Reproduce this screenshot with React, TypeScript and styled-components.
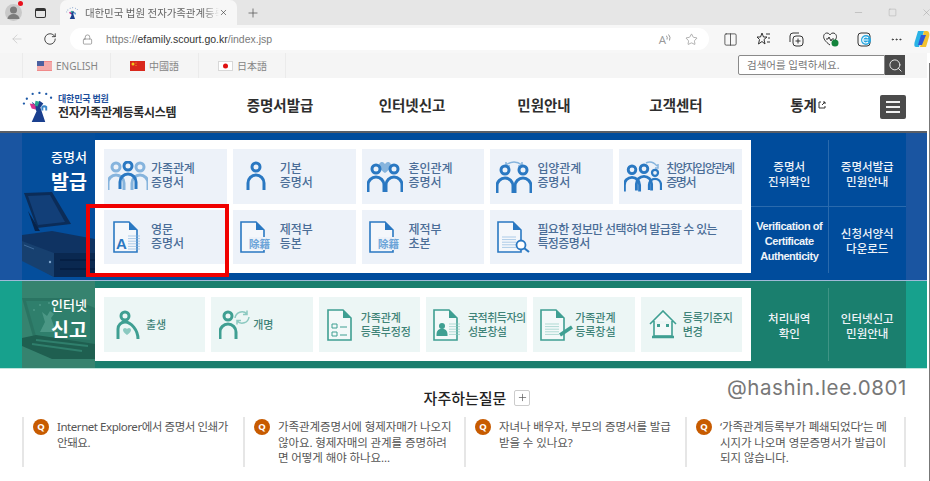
import React from "react";
import styled, { createGlobalStyle } from "styled-components";
import {
  ArrowLeft,
  Columns2,
  Lock,
  Minus,
  MoreHorizontal,
  Plus,
  RotateCw,
  Search,
  Square,
  Star,
  X,
} from "lucide-react";

const BLUE = { main: "#004c9c", side: "#1a55a1", head: "#044e9c", card: "#edf2f9", label: "#4a6d97", rule: "#2a6aad" };
const GREEN = { main: "#1a7f6e", side: "#17a18d", head: "#36836f", card: "#ecf6f5", label: "#3f8378", rule: "#3f9485" };
const KR = `"Noto Sans", "Noto Sans CJK KR", sans-serif`;

const GlobalStyle = createGlobalStyle`
  html, body { margin: 0; padding: 0; background: #fff; }
  body { font-family: ${KR}; overflow: hidden; }
  * { box-sizing: border-box; }
`;

const Screen = styled.div`
  width: 930px;
  height: 481px;
  overflow: hidden;
  display: flex;
  flex-direction: column;
`;

/* browser chrome */
const TabStrip = styled.div`
  height: 25px;
  flex: none;
  background: #e6e6e6;
  display: flex;
  align-items: center;
  color: #444;
`;

const Avatar = styled.div`
  position: relative;
  width: 17px;
  height: 17px;
  margin-left: 5px;
  border-radius: 50%;
  background: #c9c9c9;
  display: flex;
  justify-content: center;
  overflow: visible;
`;

const AvatarDot = styled.span`
  position: absolute;
  top: -3px;
  right: -1px;
  width: 5px;
  height: 5px;
  border-radius: 50%;
  background: #e8101c;
`;

const TabsButton = styled.div`
  width: 11px;
  height: 10px;
  margin: 0 0 0 13px;
  border: 1.4px solid #333;
  border-top-width: 3px;
  border-radius: 2px;
`;

const Tab = styled.div`
  width: 177px;
  height: 25px;
  margin-left: 14px;
  padding: 0 7px 0 6px;
  background: #f7f7f7;
  border-radius: 7px 7px 0 0;
  display: flex;
  align-items: center;
`;

const TabTitle = styled.span`
  width: 134px;
  margin-left: 7px;
  font-size: 10.5px;
  color: #666;
  white-space: nowrap;
  letter-spacing: -0.1px;
  -webkit-mask-image: linear-gradient(90deg, #000 88%, transparent);
`;

const NewTab = styled.div`
  margin-left: 9px;
  display: flex;
  color: #555;
`;

const WindowButtons = styled.div`
  margin-left: auto;
  margin-right: -2px;
  display: flex;
  align-items: center;
  gap: 24px;
  color: #9a9a9a;
`;

const Toolbar = styled.div`
  height: 28px;
  flex: none;
  background: #f7f7f7;
  display: flex;
  align-items: center;
  padding-left: 10px;
  color: #333;
`;

const AddressPill = styled.div`
  width: 640px;
  height: 22px;
  margin-left: 13px;
  padding: 0 11px 0 12px;
  background: #fff;
  border-radius: 11px;
  display: flex;
  align-items: center;
  color: #777;
`;

const Url = styled.span`
  margin-left: 13px;
  font: 10.5px "Liberation Sans", sans-serif;
  color: #7a7a7a;
  b { font-weight: 400; color: #333; }
`;

const PillRight = styled.div`
  margin-left: auto;
  display: flex;
  align-items: center;
  gap: 14px;
  color: #888;
`;

const ReadAloud = styled.span`
  display: flex;
  align-items: flex-start;
  font: 11.5px "Open Sans", sans-serif;
  color: #999;
`;

const ToolIcons = styled.div`
  margin-left: 14px;
  display: flex;
  align-items: center;
  gap: 18px;
  color: #333;
`;

/* page */
const Body = styled.div`
  flex: 1;
  min-height: 0;
  display: flex;
`;

const Page = styled.div`
  width: 927px;
  flex: none;
`;

const Scrollbar = styled.div`
  flex: 1;
  margin-top: 10px;
  border-right: 1px solid #777;
`;

const UtilBar = styled.div`
  height: 25px;
  background: #f5f5f5;
  display: flex;
  padding: 0 22px 0 22px;
  align-items: stretch;
`;

const LangLink = styled.div`
  width: 88px;
  display: flex;
  align-items: center;
  justify-content: flex-start;
  gap: 4px;
  padding-left: ${({ $indent }: { $indent: number }) => $indent}px;
  border-left: 1px solid #ebebeb;
  font-size: 10px;
  color: #858585;
  &:nth-child(3) { border-right: 1px solid #ebebeb; }
`;

const SearchBox = styled.div`
  margin: 2px 0 3px auto;
  width: 167px;
  display: flex;
`;

const SearchInput = styled.div`
  flex: 1;
  padding-left: 8px;
  background: #fff;
  border: 1px solid #8a8a8a;
  border-radius: 2px 0 0 2px;
  font-size: 10.5px;
  line-height: 18px;
  color: #777;
`;

const SearchButton = styled.div`
  width: 20px;
  background: #4b4b4b;
  color: #e6e6e6;
  display: flex;
  align-items: center;
  justify-content: center;
`;

const Header = styled.header`
  height: 55px;
  border-bottom: 2px solid #5b5f66;
  display: flex;
  align-items: center;
  padding: 0 21px 0 22px;
`;

const Logo = styled.div`
  width: 192px;
  display: flex;
  align-items: center;
  gap: 5px;
  padding-top: 4px;
`;

const LogoText = styled.div`
  display: flex;
  flex-direction: column;
`;

const LogoSmall = styled.span`
  font-size: 9px;
  line-height: 13px;
  font-weight: 700;
  letter-spacing: -0.2px;
  color: #1d4f9c;
`;

const LogoBig = styled.span`
  font-size: 12px;
  line-height: 16px;
  font-weight: 700;
  letter-spacing: -0.3px;
  color: #2c2c2c;
`;

const Nav = styled.nav`
  display: grid;
  grid-template-columns: repeat(5, 132px);
`;

const NavItem = styled.div`
  text-align: center;
  font-size: 14.5px;
  font-weight: 700;
  color: #2e2e2e;
  display: flex;
  align-items: center;
  justify-content: center;
  gap: 1px;
`;

const MenuButton = styled.div`
  margin-left: auto;
  margin-top: 4px;
  width: 26px;
  height: 24px;
  background: #4b4b4b;
  border-radius: 2px;
  display: flex;
  flex-direction: column;
  justify-content: center;
  align-items: center;
  gap: 3px;
  span { width: 14px; height: 2px; background: #f0f0f0; }
`;

type Tone = typeof BLUE;

const Band = styled.section<{ $tone: Tone; $h: number; $line: string }>`
  height: ${({ $h }) => $h}px;
  background: ${({ $tone }) => $tone.main};
  border-bottom: 1px solid ${({ $line }) => $line};
  display: grid;
  grid-template-columns: 22px 73px 656px 155px 21px;
`;

const Side = styled.div<{ $tone: Tone }>`
  background: ${({ $tone }) => $tone.side};
`;

const Head = styled.div<{ $tone: Tone }>`
  position: relative;
  overflow: hidden;
  background: ${({ $tone }) => $tone.head};
  display: flex;
  flex-direction: column;
  align-items: flex-end;
  padding: 15px 8px 0 0;
  color: #fff;
`;

const HeadSmall = styled.span`
  position: relative;
  font-size: 13px;
  line-height: 19px;
  font-weight: 500;
`;

const HeadBig = styled.span`
  position: relative;
  font-size: 19.5px;
  line-height: 29px;
  margin-bottom: -6px;
  font-weight: 700;
`;

const HeadArt = styled.div`
  align-self: flex-start;
  margin: 1px -8px 0 0;
  display: flex;
`;

const HeadBack = styled.div`
  position: absolute;
  left: 0;
  top: 15px;
  display: flex;
`;

const Panel = styled.div<{ $cols: number; $rows: number }>`
  position: relative;
  margin: 7px 0;
  padding: 9px;
  background: #fff;
  display: grid;
  grid-template-columns: repeat(${({ $cols }) => $cols}, minmax(0, 1fr));
  grid-template-rows: repeat(${({ $rows }) => $rows}, 1fr);
  gap: 6px;
`;

const Card = styled.div<{ $tone: Tone; $span?: number; $text: number; $small?: boolean }>`
  position: relative;
  grid-column: span ${({ $span }) => $span ?? 1};
  background: ${({ $tone }) => $tone.card};
  color: ${({ $tone }) => $tone.label};
  display: grid;
  grid-template-columns: ${({ $text }) => $text}px 1fr;
  align-items: center;
  font-size: ${({ $small }) => ($small ? 11 : 12)}px;
  line-height: 14px;
  font-weight: 500;
  letter-spacing: -0.1px;
`;

const CardIcon = styled.div<{ $nudge?: number }>`
  display: flex;
  justify-content: center;
  padding-left: ${({ $nudge }) => $nudge ?? 0}px;
`;

const CardLabel = styled.div<{ $track?: number }>`
  white-space: pre;
  letter-spacing: ${({ $track }) => $track ?? -0.1}px;
`;

const RedFrame = styled.div`
  position: absolute;
  left: -18px;
  right: -2px;
  top: -6px;
  bottom: -13px;
  border: 4px solid #f00000;
  pointer-events: none;
`;

const Links = styled.div<{ $rows: number; $rule: string }>`
  margin: 7px 0;
  display: grid;
  grid-template-columns: 1fr 1fr;
  grid-template-rows: ${({ $rows }) => ($rows === 2 ? "67px 1fr" : "1fr")};
  & > div { border-color: ${({ $rule }) => $rule}; }
`;

const LinkCell = styled.div<{ $right?: boolean; $bottom?: boolean }>`
  display: flex;
  align-items: center;
  justify-content: center;
  text-align: center;
  white-space: pre-line;
  padding-top: 2px;
  color: #eef3f8;
  font-size: 11.5px;
  line-height: 15px;
  font-weight: 500;
  border-style: solid;
  border-width: 0 ${({ $right }) => ($right ? "1px" : 0)} ${({ $bottom }) => ($bottom ? "1px" : 0)} 0;
`;

const LinkEnglish = styled(LinkCell)`
  font-family: "Liberation Sans", sans-serif;
  font-size: 11px;
  font-weight: 700;
  letter-spacing: -0.45px;
`;

const Faq = styled.section`
  position: relative;
  padding: 20px 22px 0;
`;

const FaqTitleRow = styled.div`
  display: flex;
  justify-content: center;
  align-items: center;
  gap: 8px;
  padding-left: 27px;
  height: 17px;
`;

const FaqTitle = styled.h2`
  margin: 0;
  font-size: 15px;
  font-weight: 500;
  color: #222;
`;

const FaqPlus = styled.div`
  width: 16px;
  height: 16px;
  border: 1px solid #ccc;
  border-radius: 2px;
  display: flex;
  align-items: center;
  justify-content: center;
  color: #555;
`;

const FaqGrid = styled.div`
  margin-top: 11px;
  width: 884px;
  display: grid;
  grid-template-columns: repeat(4, 221px);
  border-right: 2px solid #e6e6e6;
`;

const FaqItem = styled.div`
  height: 50px;
  border-left: 2px solid #e6e6e6;
  padding: 2px 0 0 9px;
  display: grid;
  grid-template-columns: 16px 1fr;
  column-gap: 8px;
`;

const QBadge = styled.div`
  width: 16px;
  height: 16px;
  border-radius: 50%;
  background: #c75b00;
  color: #fff;
  font-size: 9.5px;
  font-weight: 700;
  line-height: 16px;
  text-align: center;
`;

const FaqText = styled.div<{ $track?: number }>`
  font-size: 11.5px;
  line-height: 15.7px;
  color: #555;
  letter-spacing: ${({ $track }) => $track ?? -0.1}px;
  white-space: pre;
`;

const Watermark = styled.div`
  position: absolute;
  top: 7px;
  right: 20px;
  font: 400 20.5px "Inter", sans-serif;
  line-height: 24px;
  letter-spacing: 0.6px;
  color: #777;
`;

/* drawings */
const Person = ({ x, y, c, s = 1 }: { x: number; y: number; c: string; s?: number }) => (
  <g transform={`translate(${x} ${y}) scale(${s})`} fill="none" stroke={c} strokeWidth={3}>
    <circle cx={0} cy={5} r={4} />
    <path d="M-8 28v-7a8 8 0 0 1 16 0v7" />
  </g>
);

const Doc = ({ c, x = 1 }: { c: string; x?: number }) => (
  <>
    <path d={`M${x} 1h15l8 8v22h-23z`} fill="#fff" fillOpacity={0.4} stroke={c} strokeWidth={1.6} />
    <path d={`M${x + 15} 1v8h8z`} fill={c} />
  </>
);

const Lines = ({ x, y, c, n = 5, w = 12 }: { x: number; y: number; c: string; n?: number; w?: number }) => (
  <path
    d={Array.from({ length: n }, (_, i) => `M${x} ${y + i * 2.6}h${w}`).join("")}
    stroke={c}
    strokeWidth={1}
    opacity={0.65}
  />
);

const ArrowArc = ({ x, y, c }: { x: number; y: number; c: string }) => (
  <path d={`M${x} ${y + 4}q8 -6 16 0M${x} ${y + 1}v4h4M${x + 16} ${y + 1}v4h-4`} fill="none" stroke={c} strokeWidth={1.5} />
);

const Svg = styled.svg`
  display: block;
  flex: none;
`;

const B = "#2a78c2";
const BL = "#86b4dd";
const G = "#3f9f92";
const GL = "#8bc9c0";

const icons: Record<string, React.ReactNode> = {
  family: (
    <Svg width={40} height={30} viewBox="0 0 40 30">
      <Person x={8} y={1} c={BL} />
      <Person x={32} y={1} c={BL} />
      <Person x={20} y={0} c={B} />
    </Svg>
  ),
  basic: (
    <Svg width={20} height={30} viewBox="0 0 20 30">
      <Person x={10} y={1} c={B} />
    </Svg>
  ),
  marriage: (
    <Svg width={36} height={33} viewBox="0 0 36 33">
      <path d="M18 13c-9-6-6-11-3-11 1.500 0 3 2 3 2s1.500-2 3-2c3 0 6 5-3 11z" fill={BL} />
      <Person x={9} y={4} c={B} />
      <Person x={27} y={4} c={B} />
    </Svg>
  ),
  adopt: (
    <Svg width={36} height={33} viewBox="0 0 36 33">
      <ArrowArc x={10} y={1} c={BL} />
      <Person x={9} y={5} c={B} />
      <Person x={27} y={5} c={B} />
    </Svg>
  ),
  parental: (
    <Svg width={38} height={33} viewBox="0 0 38 33">
      <path d="M22 3q6-3 11 3M31 8h3v-4" fill="none" stroke={BL} strokeWidth={1.5} />
      <Person x={8} y={5} c={B} s={0.95} />
      <Person x={20} y={4} c={B} s={0.95} />
      <Person x={31} y={9} c={B} s={0.75} />
    </Svg>
  ),
  english: (
    <Svg width={30} height={32} viewBox="0 0 30 32">
      <Doc c={B} />
      <text x={3} y={28} fontFamily="Liberation Sans" fontWeight={700} fontSize={15} fill={B}>A</text>
      <Lines x={15} y={15} c={BL} n={6} />
    </Svg>
  ),
  removed: (
    <Svg width={32} height={32} viewBox="0 0 32 32">
      <Doc c={B} />
      <rect x={9} y={16} width={23} height={13} fill={BLUE.card} />
      <text x={9} y={27} fontFamily="Noto Sans CJK TC" fontWeight={700} fontSize={10.5} fill="#6ba4d8">除籍</text>
    </Svg>
  ),
  special: (
    <Svg width={34} height={32} viewBox="0 0 34 32">
      <Doc c={B} />
      <Lines x={5} y={16} c={BL} n={5} w={14} />
      <circle cx={24} cy={24} r={4.500} fill="#fff" stroke={B} strokeWidth={1.8} />
      <path d="M27 27l5 4" stroke={B} strokeWidth={2.2} />
    </Svg>
  ),
  birth: (
    <Svg width={24} height={30} viewBox="0 0 24 30">
      <circle cx={9} cy={6} r={4} fill="none" stroke={G} strokeWidth={3} />
      <path d="M2 29V19a7 7 0 0 1 7-7c6 0 13 8 13 17" fill="none" stroke={G} strokeWidth={3} />
      <path d="M11 25c-6-4-4-7-2-7 1 0 2 1 2 1s1-1 2-1c2 0 4 3-2 7z" fill={GL} />
    </Svg>
  ),
  rename: (
    <Svg width={32} height={29} viewBox="0 0 32 29">
      <Person x={9} y={1} c={G} />
      <path d="M16 8a7 7 0 0 1 12-4M30 7a7 7 0 0 1-12 4M28 0.500v4h-4M18 14.500v-4h4" fill="none" stroke={GL} strokeWidth={1.500} />
    </Svg>
  ),
  correct: (
    <Svg width={26} height={32} viewBox="0 0 26 32">
      <Doc c={G} />
      <path d="M5 15h5v4h-5zM5 23h5v4h-5zM13 18h7M13 26h7" fill="none" stroke={G} strokeWidth={1} />
    </Svg>
  ),
  acquire: (
    <Svg width={30} height={32} viewBox="0 0 30 32">
      <Doc c={G} />
      <circle cx={9} cy={17} r={3} fill={G} />
      <path d="M3.500 27v-2a5 5 0 0 1 11 0v2z" fill={G} />
      <Lines x={16} y={15} c={GL} n={5} w={11} />
    </Svg>
  ),
  create: (
    <Svg width={34} height={32} viewBox="0 0 34 32">
      <Doc c={G} />
      <Lines x={5} y={15} c={GL} n={5} w={14} />
      <path d="M20 26l12-8" stroke={G} strokeWidth={3.500} />
    </Svg>
  ),
  house: (
    <Svg width={28} height={29} viewBox="0 0 28 29">
      <path d="M1 14L14 1l13 13M5 11v15h18V11" fill="#fff" fillOpacity={0.4} stroke={G} strokeWidth={1.6} />
      <path d="M3 27h22" stroke={G} strokeWidth={2.500} />
      <path d="M8 14h3v3H8zM17 14h3v3h-3z" fill={G} />
    </Svg>
  ),
};

const Emblem = ({ size }: { size: number }) => (
  <Svg width={size} height={size} viewBox="0 0 32 32">
    <g fill="#1f5aa8">
      <circle cx={2} cy={13} r={1.200} />
      <circle cx={5} cy={8} r={1.200} />
      <circle cx={11} cy={3} r={1.200} />
      <circle cx={18} cy={2} r={1.200} />
      <circle cx={25} cy={3} r={1.200} />
      <circle cx={30} cy={7} r={1.200} />
    </g>
    <path d="M10 11l5 4 3-5 4 3-3 4 5 15H10l5-11z" fill="#1a3f8e" />
    <path d="M8 13l6 1v5l-4-1z" fill="#d8348e" />
    <path d="M14 10l4 1-2 5-3-1z" fill="#2aa58e" />
    <path d="M20 16a4 4 0 0 1 6 0v4h-2v-3h-2v3h-2z" fill="#3a86c8" />
  </Svg>
);

const FlagUS = () => (
  <Svg width={15} height={10} viewBox="0 0 15 10">
    <rect width={15} height={10} fill="#f08a8a" />
    <path d="M0 2h15M0 4h15M0 6h15M0 8h15" stroke="#f7c8c8" />
    <rect width={7} height={5} fill="#4a5f9f" />
  </Svg>
);

const FlagCN = () => (
  <Svg width={15} height={10} viewBox="0 0 15 10">
    <rect width={15} height={10} fill="#d9281c" />
    <circle cx={3} cy={3} r={1.500} fill="#f2c81c" />
    <circle cx={6} cy={2} r={0.500} fill="#f2c81c" />
    <circle cx={6} cy={4.500} r={0.500} fill="#f2c81c" />
  </Svg>
);

const FlagJP = () => (
  <Svg width={15} height={10} viewBox="0 0 15 10">
    <rect x={0.500} y={0.500} width={14} height={9} fill="#fff" stroke="#d8d8d8" />
    <circle cx={7.500} cy={5} r={2.500} fill="#e01010" />
  </Svg>
);

const Printer = () => (
  <Svg width={73} height={86} viewBox="0 0 73 86">
    <path d="M2 2l28-1 19 32-34 4z" fill="#0b2c58" />
    <path d="M6 5l22-1 15 27-27 3z" fill="#123f78" />
    <path d="M6 20l12 20h-5z" fill="#07234a" />
    <path d="M0 44l30-4 43 8v38H32L0 68z" fill="#0f3362" />
    <path d="M0 50l32 12v24L0 70z" fill="#17406f" />
    <path d="M32 62h41v24H32z" fill="#0a2850" />
    <path d="M38 69h35M38 78h35" stroke="#051f44" strokeWidth={2} />
    <path d="M2 54l10 4" stroke="#3f6b9c" strokeWidth={1} />
    <circle cx={28} cy={71} r={1.200} fill="#7fa5cc" />
  </Svg>
);

const Laptop = () => (
  <Svg width={73} height={63} viewBox="0 0 73 63">
    <path d="M0 2h48l25 10v36L12 44z" fill="#2a7462" />
    <path d="M4 5h42l22 9v30L14 40z" fill="#2f7f6c" />
    <path d="M0 42l14-3 59 9v15H30L0 50z" fill="#1f5f50" />
    <path d="M14 44l52 6M10 48l50 7" stroke="#2f7f6c" strokeWidth={2} />
    <g opacity={0.6}>
      <path d="M20 16l5 4 3-5 4 3-3 4 5 14H18l5-10z" fill="#5fa897" />
      <circle cx={12} cy={14} r={1} fill="#5fa897" />
      <circle cx={18} cy={9} r={1} fill="#5fa897" />
      <circle cx={27} cy={7} r={1} fill="#5fa897" />
    </g>
  </Svg>
);

const issueCards = [
  { icon: "family", label: "가족관계\n증명서" },
  { icon: "basic", label: "기본\n증명서" },
  { icon: "marriage", label: "혼인관계\n증명서" },
  { icon: "adopt", label: "입양관계\n증명서" },
  { icon: "parental", label: "친양자입양관계\n증명서", track: -1.4 },
  { icon: "english", label: "영문\n증명서", marked: true },
  { icon: "removed", label: "제적부\n등본" },
  { icon: "removed", label: "제적부\n초본" },
  { icon: "special", label: "필요한 정보만 선택하여 발급할 수 있는\n특정증명서", span: 2, track: -0.6 },
];

const reportCards = [
  { icon: "birth", label: "출생", nudge: 6 },
  { icon: "rename", label: "개명", nudge: 6 },
  { icon: "correct", label: "가족관계\n등록부정정", nudge: -2 },
  { icon: "acquire", label: "국적취득자의\n성본창설", nudge: 2, track: -0.5 },
  { icon: "create", label: "가족관계\n등록창설", nudge: 6 },
  { icon: "house", label: "등록기준지\n변경", nudge: 2 },
];

const faqs = [
  { text: "Internet Explorer에서 증명서 인쇄가\n안돼요.", track: -0.45 },
  { text: "가족관계증명서에 형제자매가 나오지\n않아요. 형제자매의 관계를 증명하려\n면 어떻게 해야 하나요..." },
  { text: "자녀나 배우자, 부모의 증명서를 발급\n받을 수 있나요?" },
  { text: "‘가족관계등록부가 폐쇄되었다’는 메\n시지가 나오며 영문증명서가 발급이\n되지 않습니다." },
];

const App = () => (
  <Screen>
    <GlobalStyle />
    <TabStrip>
      <Avatar>
        <Svg width={17} height={17} viewBox="0 0 17 17">
          <circle cx={8.500} cy={6} r={3.500} fill="#7c7c7c" />
          <path d="M2.500 15a6 5 0 0 1 12 0z" fill="#7c7c7c" />
        </Svg>
        <AvatarDot />
      </Avatar>
      <TabsButton />
      <Tab>
        <Emblem size={12} />
        <TabTitle>대한민국 법원 전자가족관계등록</TabTitle>
        <X size={9} strokeWidth={1.6} color="#333" />
      </Tab>
      <NewTab>
        <Plus size={14} strokeWidth={1.3} />
      </NewTab>
      <WindowButtons>
        <Minus size={11} strokeWidth={1} />
        <Square size={9} strokeWidth={1} />
        <X size={11} strokeWidth={1} />
      </WindowButtons>
    </TabStrip>

    <Toolbar>
      <ArrowLeft size={14} strokeWidth={1.2} color="#c4c4c4" />
      <RotateCw size={14} strokeWidth={1.5} style={{ marginLeft: 19 }} />
      <AddressPill>
        <Lock size={11} strokeWidth={1.4} />
        <Url>
          https://<b>efamily.scourt.go.kr</b>/index.jsp
        </Url>
        <PillRight>
          <ReadAloud>
            A
            <Svg width={5} height={7} viewBox="0 0 5 7" fill="none" stroke="#999" style={{ marginTop: 2 }}>
              <path d="M0 1.500q2 1.500 1 4M2.500 0.500q2.500 2.500 1 6" />
            </Svg>
          </ReadAloud>
          <Star size={13} strokeWidth={1.2} />
        </PillRight>
      </AddressPill>
      <ToolIcons>
        <Columns2 size={15} strokeWidth={1.2} />
        <Svg width={15} height={14} viewBox="0 0 15 14" fill="none" stroke="#333">
          <path d="M6 1l1.500 4H11L8 7.500 9 12 6 9.500 2.500 12 3.500 7.500 1 5h3.500zM10 2h4M12 6h2M11 10h3" />
        </Svg>
        <Svg width={15} height={15} viewBox="0 0 15 15" fill="none" stroke="#333">
          <rect x={4} y={4} width={10} height={10} rx={3} />
          <path d="M1 10V4a3 3 0 0 1 3-3h6M9 6.500v5M6.500 9h5" />
        </Svg>
        <Svg width={17} height={15} viewBox="0 0 17 15" fill="none" stroke="#333">
          <path d="M8 13C-2 6 2 1 5 1c2 0 3 2 3 2s1-2 3-2c3 0 5 4 2 7" />
          <path d="M4 7h2l1-2 2 4 1-2h2" />
          <circle cx={13} cy={11} r={3.500} fill="#14843c" stroke="none" />
        </Svg>
        <Svg width={15} height={15} viewBox="0 0 15 15" fill="none">
          <rect x={1} y={1} width={12} height={13} rx={3} stroke="#333" />
          <circle cx={9} cy={8} r={5} fill="#27a6e0" />
          <path d="M6.500 8h5M11 10a3 3 0 1 1 0-4" stroke="#fff" strokeWidth={1.200} />
        </Svg>
        <MoreHorizontal size={13} strokeWidth={1.6} />
        <Svg width={16} height={18} viewBox="0 0 16 18" style={{ marginLeft: -7 }}>
          <path d="M4 1h6L5 17H2C0 17 0 14 1 11z" fill="#2ab3e6" />
          <path d="M10 1h3c2 0 3 3 2 6l-3 10H6z" fill="#f2c230" />
          <path d="M7 5h5L8 15H4z" fill="#2e56d8" />
        </Svg>
      </ToolIcons>
    </Toolbar>

    <Body>
      <Page>
        <UtilBar>
          <LangLink $indent={14}>
            <FlagUS />
            ENGLISH
          </LangLink>
          <LangLink $indent={19}>
            <FlagCN />
            中國語
          </LangLink>
          <LangLink $indent={19}>
            <FlagJP />
            日本語
          </LangLink>
          <SearchBox>
            <SearchInput>검색어를 입력하세요.</SearchInput>
            <SearchButton>
              <Search size={15} strokeWidth={1.6} />
            </SearchButton>
          </SearchBox>
        </UtilBar>

        <Header>
          <Logo>
            <Emblem size={31} />
            <LogoText>
              <LogoSmall>대한민국 법원</LogoSmall>
              <LogoBig>전자가족관계등록시스템</LogoBig>
            </LogoText>
          </Logo>
          <Nav>
            <NavItem>증명서발급</NavItem>
            <NavItem>인터넷신고</NavItem>
            <NavItem>민원안내</NavItem>
            <NavItem>고객센터</NavItem>
            <NavItem>
              통계
              <Svg width={8} height={8} viewBox="0 0 8 8" fill="none" stroke="#333">
                <path d="M3 1H1v6h6V5M4 4l3-3M5 1h2v2" />
              </Svg>
            </NavItem>
          </Nav>
          <MenuButton>
            <span />
            <span />
            <span />
          </MenuButton>
        </Header>

        <Band $tone={BLUE} $h={148} $line="#9fb9d8">
          <Side $tone={BLUE} />
          <Head $tone={BLUE}>
            <HeadSmall>증명서</HeadSmall>
            <HeadBig>발급</HeadBig>
            <HeadArt>
              <Printer />
            </HeadArt>
          </Head>
          <Panel $cols={5} $rows={2}>
            {issueCards.map((card) => (
              <Card key={card.label} $tone={BLUE} $span={card.span} $text={47}>
                <CardIcon>{icons[card.icon]}</CardIcon>
                <CardLabel $track={card.track}>{card.label}</CardLabel>
                {card.marked && <RedFrame />}
              </Card>
            ))}
          </Panel>
          <Links $rows={2} $rule={BLUE.rule}>
            <LinkCell $right $bottom>{"증명서\n진위확인"}</LinkCell>
            <LinkCell $bottom>{"증명서발급\n민원안내"}</LinkCell>
            <LinkEnglish $right>{"Verification of\nCertificate\nAuthenticity"}</LinkEnglish>
            <LinkCell>{"신청서양식\n다운로드"}</LinkCell>
          </Links>
          <Side $tone={BLUE} />
        </Band>

        <Band $tone={GREEN} $h={88} $line="#bfe5de">
          <Side $tone={GREEN} />
          <Head $tone={GREEN}>
            <HeadBack>
              <Laptop />
            </HeadBack>
            <HeadSmall>인터넷</HeadSmall>
            <HeadBig>신고</HeadBig>
          </Head>
          <Panel $cols={6} $rows={1}>
            {reportCards.map((card) => (
              <Card key={card.label} $tone={GREEN} $text={42} $small>
                <CardIcon $nudge={card.nudge}>{icons[card.icon]}</CardIcon>
                <CardLabel $track={card.track}>{card.label}</CardLabel>
              </Card>
            ))}
          </Panel>
          <Links $rows={1} $rule={GREEN.rule}>
            <LinkCell $right>{"처리내역\n확인"}</LinkCell>
            <LinkCell>{"인터넷신고\n민원안내"}</LinkCell>
          </Links>
          <Side $tone={GREEN} />
        </Band>

        <Faq>
          <Watermark>@hashin.lee.0801</Watermark>
          <FaqTitleRow>
            <FaqTitle>자주하는질문</FaqTitle>
            <FaqPlus>
              <Plus size={11} strokeWidth={1.5} />
            </FaqPlus>
          </FaqTitleRow>
          <FaqGrid>
            {faqs.map((faq) => (
              <FaqItem key={faq.text}>
                <QBadge>Q</QBadge>
                <FaqText $track={faq.track}>{faq.text}</FaqText>
              </FaqItem>
            ))}
          </FaqGrid>
        </Faq>
      </Page>
      <Scrollbar />
    </Body>
  </Screen>
);

export default App;
